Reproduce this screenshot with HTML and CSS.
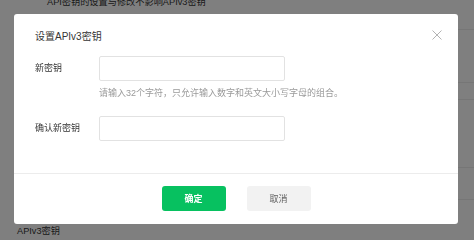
FILE: index.html
```html
<!DOCTYPE html>
<html lang="zh-CN">
<head>
<meta charset="utf-8">
<title>设置APIv3密钥</title>
<link rel="stylesheet" href="styles.css">
</head>
<body>
<div class="page">
  <div class="row row-a"><p class="page-note">API密钥的设置与修改不影响APIv3密钥</p></div>
  <div class="row row-b"></div>
  <div class="row row-c"></div>
  <div class="row row-d"></div>
  <div class="row row-e"></div>
  <p class="page-label">APIv3密钥</p>
</div>
<div class="mask"></div>
<div class="dialog">
  <div class="dialog-hd">
    <h3 class="dialog-title">设置APIv3密钥</h3>
    <svg class="dialog-close" width="10" height="10" viewBox="0 0 10 10"><path d="M0.5 0.5L9.5 9.5M9.5 0.5L0.5 9.5" stroke="#aaaaaa" stroke-width="0.9" fill="none"/></svg>
  </div>
  <div class="dialog-bd">
    <div class="form-row">
      <label class="form-label">新密钥</label>
      <div class="form-ctrl">
        <input class="form-input" type="text">
        <p class="form-tips">请输入32个字符，只允许输入数字和英文大小写字母的组合。</p>
      </div>
    </div>
    <div class="form-row">
      <label class="form-label">确认新密钥</label>
      <div class="form-ctrl">
        <input class="form-input" type="text">
      </div>
    </div>
  </div>
  <div class="dialog-ft">
    <button class="btn btn-primary">确定</button>
    <button class="btn btn-default">取消</button>
  </div>
</div>
</body>
</html>
```

FILE: styles.css
```css
html, body {
  margin: 0;
  padding: 0;
  width: 474px;
  height: 237px;
  overflow: hidden;
  background: #fff;
  font-family: "Liberation Sans", "Noto Sans CJK SC", sans-serif;
  color: #353535;
}

.page {
  display: flex;
  flex-direction: column;
}

.row {
  margin-left: 30px;
  border-bottom: 1px solid #ececec;
  box-sizing: border-box;
}
.row-a { height: 30px; }
.row-b { height: 53px; }
.row-c { height: 17px; }
.row-d { height: 68px; }
.row-e { height: 32px; }

.page-note {
  margin: -3px 0 0 17px;
  font-size: 9.2px;
  line-height: 11px;
  color: #353535;
}

.page-label {
  margin: 25px 0 0 17px;
  font-size: 9.2px;
  line-height: 12px;
  color: #353535;
}

.mask {
  position: fixed;
  inset: 0;
  background: rgba(0, 0, 0, 0.5);
}

.dialog {
  position: absolute;
  left: 14px;
  top: 14px;
  width: 444px;
  height: 210px;
  background: #fff;
  border-radius: 3px;
  display: flex;
  flex-direction: column;
  box-sizing: border-box;
}

.dialog-hd {
  height: 42px;
  padding: 0 16px 0 21px;
  display: flex;
  align-items: center;
  justify-content: space-between;
}

.dialog-title {
  margin: 0;
  font-size: 10px;
  font-weight: normal;
  color: #353535;
}

.dialog-close {
  display: block;
}

.dialog-bd {
  flex: 1;
  padding: 0 21px;
  display: flex;
  flex-direction: column;
  gap: 17px;
}

.form-row {
  display: grid;
  grid-template-columns: 64px 186px;
  align-items: start;
}

.form-label {
  font-size: 9px;
  line-height: 25px;
  color: #353535;
}

.form-input {
  display: block;
  box-sizing: border-box;
  width: 186px;
  height: 25px;
  margin: 0;
  border: 1px solid #e2e2e2;
  border-radius: 2px;
  background: #fff;
  outline: none;
}

.form-tips {
  margin: 6px 0 0;
  font-size: 9px;
  line-height: 12px;
  color: #9a9a9a;
  white-space: nowrap;
}

.dialog-ft {
  border-top: 1px solid #ececec;
  padding: 12px 0 13px;
  display: flex;
  justify-content: center;
  gap: 21px;
}

.btn {
  width: 64px;
  height: 25px;
  border: none;
  border-radius: 3px;
  font-family: "Liberation Sans", "Noto Sans CJK SC", sans-serif;
  font-size: 9px;
  padding: 0;
}

.btn-primary {
  background: #07c160;
  color: #fff;
  font-weight: bold;
}

.btn-default {
  background: #f2f2f2;
  color: #606060;
}
```
